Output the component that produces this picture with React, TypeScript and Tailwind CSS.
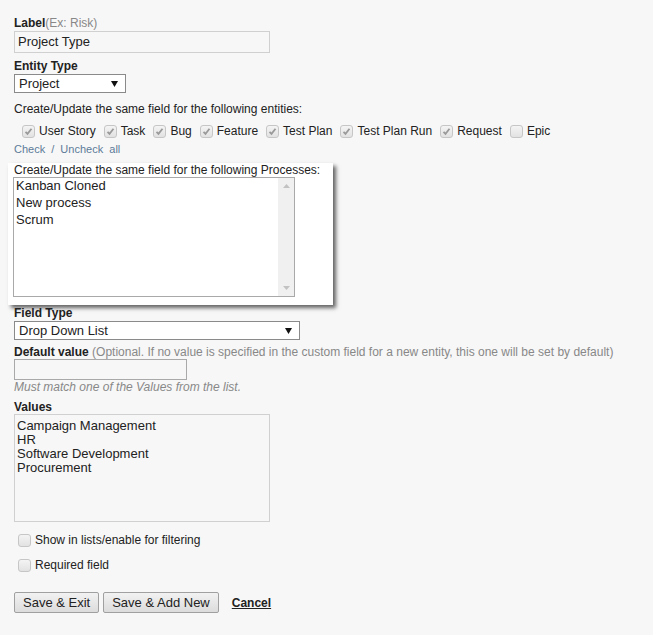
import React from "react";

const Check = ({ checked }: { checked: boolean }) => (
  <span className="inline-flex w-[13px] h-[13px] shrink-0 items-center justify-center rounded-[3px] border border-[#c6c6c6] bg-gradient-to-b from-[#f4f4f4] to-[#e2e2e2]">
    {checked && (
      <svg width="9" height="9" viewBox="0 0 9 9">
        <path d="M1.5 4.8 L3.5 6.8 L7.5 1.8" fill="none" stroke="#9a9a9a" strokeWidth="1.8" />
      </svg>
    )}
  </span>
);

const Arrow = () => (
  <svg width="7" height="6" viewBox="0 0 7 6">
    <path d="M0 0 L7 0 L3.5 6 Z" fill="#111" />
  </svg>
);

export default function App() {
  const entities: [string, boolean][] = [
    ["User Story", true],
    ["Task", true],
    ["Bug", true],
    ["Feature", true],
    ["Test Plan", true],
    ["Test Plan Run", true],
    ["Request", true],
    ["Epic", false],
  ];
  return (
    <div className="w-[653px] h-[635px] bg-[#f7f7f7] text-[#222] text-[12px] leading-[14px] font-['Liberation_Sans',Arial,sans-serif] pl-[14px] pt-[16px] overflow-hidden">
      <div className="font-bold">
        Label<span className="font-normal text-[#888]">(Ex: Risk)</span>
      </div>
      <div className="mt-[1px] w-[256px] h-[22px] border border-[#d0d0d0] bg-[#f7f7f7] text-[13px] leading-[20px] px-[3px]">
        Project Type
      </div>
      <div className="font-bold mt-[6px]">Entity Type</div>
      <div className="mt-[1px] w-[112px] h-[19px] border border-[#8a8a8a] bg-white text-[13px] leading-[17px] pl-[4px] pr-[7px] flex items-center justify-between">
        <span>Project</span>
        <Arrow />
      </div>
      <div className="mt-[9px]">Create/Update the same field for the following entities:</div>
      <div className="mt-[8px] ml-[8px] flex items-center gap-[4px] text-[12px] leading-[14px]">
        {entities.map(([name, c]) => (
          <span key={name} className="inline-flex items-center gap-[4px] mr-[4px]">
            <Check checked={c} />
            <span>{name}</span>
          </span>
        ))}
      </div>
      <div className="mt-[5px] text-[11px] leading-[13px] text-[#5d7b99]">
        Check <span className="mx-[3px]">/</span> Uncheck&nbsp; all
      </div>
      <div className="mt-[7px] -ml-[6px] w-[325px] bg-white shadow-[3px_3px_4px_rgba(0,0,0,0.6)] pl-[6px] pb-[8px]">
        <div>Create/Update the same field for the following Processes:</div>
        <div className="-ml-[1px] w-[282px] h-[120px] border border-[#a9a9a9] bg-white flex">
          <div className="flex-1 pl-[2px] -mt-[1px] text-[13px] leading-[17px]">
            <div>Kanban Cloned</div>
            <div>New process</div>
            <div>Scrum</div>
          </div>
          <div className="w-[16px] bg-[#f0f0f0] flex flex-col items-center justify-between py-[6px]">
            <svg width="7" height="4" viewBox="0 0 7 4">
              <path d="M0 4 L3.5 0 L7 4 Z" fill="#c2c2c2" />
            </svg>
            <svg width="7" height="4" viewBox="0 0 7 4">
              <path d="M0 0 L3.5 4 L7 0 Z" fill="#c2c2c2" />
            </svg>
          </div>
        </div>
      </div>
      <div className="font-bold mt-[1px]">Field Type</div>
      <div className="mt-[1px] w-[286px] h-[19px] border border-[#8a8a8a] bg-white text-[13px] leading-[17px] pl-[4px] pr-[7px] flex items-center justify-between">
        <span>Drop Down List</span>
        <Arrow />
      </div>
      <div className="mt-[5px]">
        <span className="font-bold">Default value</span>{" "}
        <span className="text-[#888]">
          (Optional. If no value is specified in the custom field for a new entity, this one will be set by default)
        </span>
      </div>
      <div className="w-[173px] h-[21px] border border-[#a9a9a9] bg-[#f7f7f7]" />
      <div className="italic text-[#888]">Must match one of the Values from the list.</div>
      <div className="font-bold mt-[6px]">Values</div>
      <div className="w-[256px] h-[108px] border border-[#d0d0d0] bg-[#f7f7f7] pl-[2px] pt-[4px] text-[13px] leading-[14px]">
        <div>Campaign Management</div>
        <div>HR</div>
        <div>Software Development</div>
        <div>Procurement</div>
      </div>
      <div className="mt-[11px] ml-[4px] flex items-center gap-[4px]">
        <Check checked={false} />
        <span>Show in lists/enable for filtering</span>
      </div>
      <div className="mt-[11px] ml-[4px] flex items-center gap-[4px]">
        <Check checked={false} />
        <span>Required field</span>
      </div>
      <div className="mt-[20px] flex items-center text-[13px]">
        <button className="h-[21px] px-[8px] border border-[#a0a0a0] rounded-[2px] bg-gradient-to-b from-[#f2f2f2] to-[#dcdcdc] leading-[19px]">
          Save &amp; Exit
        </button>
        <button className="ml-[4px] h-[21px] px-[8px] border border-[#a0a0a0] rounded-[2px] bg-gradient-to-b from-[#f2f2f2] to-[#dcdcdc] leading-[19px]">
          Save &amp; Add New
        </button>
        <a className="ml-[13px] underline font-bold text-[12px] text-[#222]">Cancel</a>
      </div>
    </div>
  );
}
